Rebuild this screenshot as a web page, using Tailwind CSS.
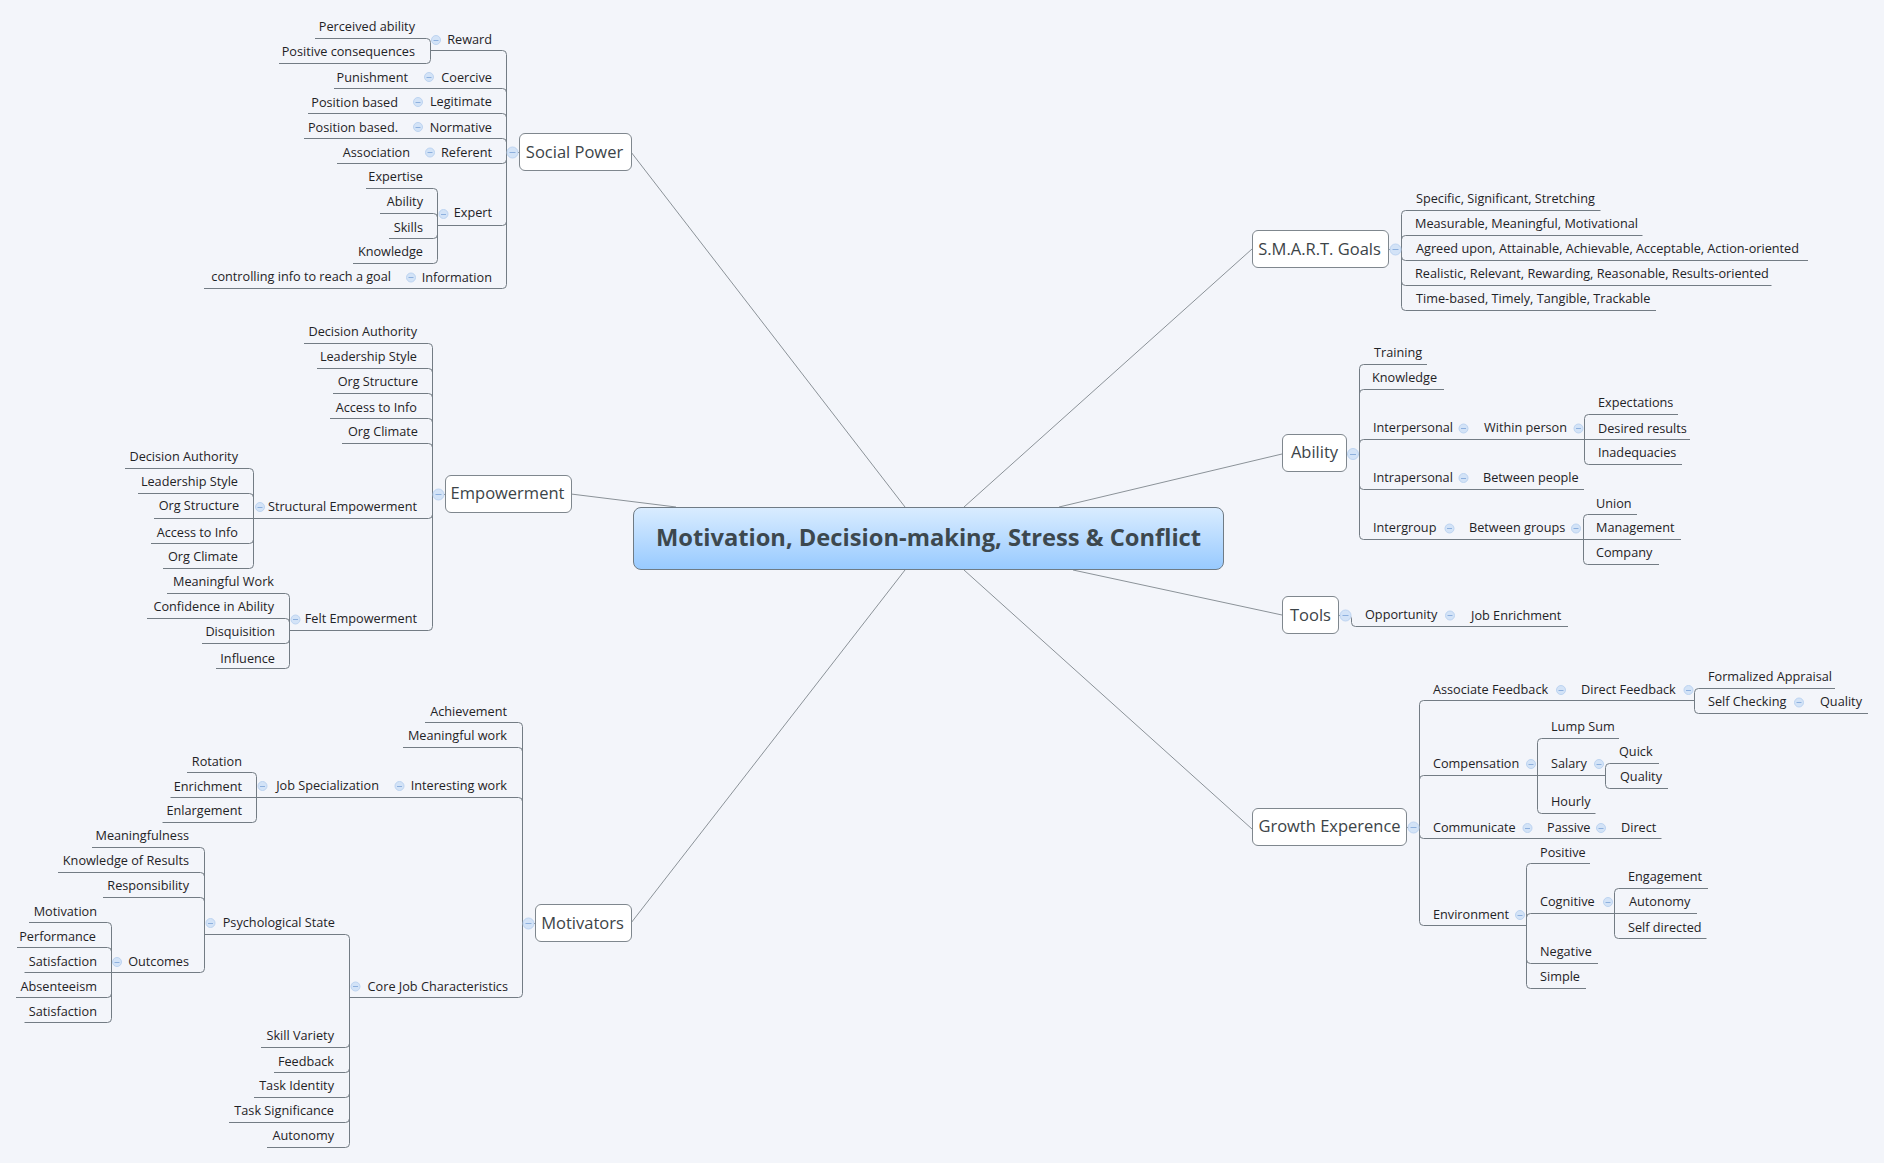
<!DOCTYPE html>
<html lang="en">
<head>
<meta charset="utf-8">
<title>Motivation, Decision-making, Stress &amp; Conflict</title>
<script src="https://cdn.jsdelivr.net/npm/@tailwindcss/browser@4"></script>
</head>
<body class="m-0 bg-[#f3f5fa]">
<div class="relative w-[1884px] h-[1163px] overflow-hidden bg-[#f3f5fa] font-['Open_Sans','Noto_Sans',sans-serif] text-[12.7px] leading-[16px] text-[#1f2326] whitespace-nowrap">

<svg class="absolute inset-0 w-[1884px] h-[1163px]" viewBox="0 0 1884 1163" fill="none">
  <!-- central connectors -->
  <g class="stroke-[#8b9298]" stroke-width="1">
    <path d="M631 152 L905 507"/>
    <path d="M571 494 L676 507"/>
    <path d="M631 923 L905 570"/>
    <path d="M1252 249 L964 507"/>
    <path d="M1282 454 L1059 507"/>
    <path d="M1282 615 L1073 570"/>
    <path d="M1252 829 L964 570"/>
  </g>
  <!-- branch lines -->
  <g class="stroke-[#737c84]" stroke-width="1">
    <!-- Social Power -->
    <path d="M506.5 152.5 H519.5"/>
    <path d="M430.5 50.5 H502.5 Q506.5 50.5 506.5 54.5 V284.5 Q506.5 288.5 502.5 288.5 H204"/>
    <path d="M334 88.5 H502.5 Q506.5 88.5 506.5 92.5"/>
    <path d="M308 113.5 H502.5 Q506.5 113.5 506.5 117.5"/>
    <path d="M304 138.5 H502.5 Q506.5 138.5 506.5 142.5"/>
    <path d="M337 163.5 H502.5 Q506.5 163.5 506.5 159.5"/>
    <path d="M437.5 225.5 H502.5 Q506.5 225.5 506.5 221.5"/>
    <path d="M315 38.5 H426.5 Q430.5 38.5 430.5 42.5 V59.5 Q430.5 63.5 426.5 63.5 H279"/>
    <path d="M366 188.5 H433.5 Q437.5 188.5 437.5 192.5 V259.5 Q437.5 263.5 433.5 263.5 H353"/>
    <path d="M380 213.5 H433.5 Q437.5 213.5 437.5 217.5"/>
    <path d="M389 238.5 H433.5 Q437.5 238.5 437.5 234.5"/>
    <!-- Empowerment -->
    <path d="M432.5 494.5 H445"/>
    <path d="M304 343.5 H428.5 Q432.5 343.5 432.5 347.5 V626.5 Q432.5 630.5 428.5 630.5 H289.5"/>
    <path d="M317 368.5 H428.5 Q432.5 368.5 432.5 372.5"/>
    <path d="M333 393.5 H428.5 Q432.5 393.5 432.5 397.5"/>
    <path d="M330 418.5 H428.5 Q432.5 418.5 432.5 422.5"/>
    <path d="M342 443.5 H428.5 Q432.5 443.5 432.5 447.5"/>
    <path d="M154 518.5 H428.5 Q432.5 518.5 432.5 514.5"/>
    <path d="M125 468.5 H249.5 Q253.5 468.5 253.5 472.5 V564.5 Q253.5 568.5 249.5 568.5 H163"/>
    <path d="M138 493.5 H249.5 Q253.5 493.5 253.5 497.5"/>
    <path d="M151 543.5 H249.5 Q253.5 543.5 253.5 539.5"/>
    <path d="M167 593.5 H285.5 Q289.5 593.5 289.5 597.5 V664.5 Q289.5 668.5 285.5 668.5 H216"/>
    <path d="M147 618.5 H285.5 Q289.5 618.5 289.5 622.5"/>
    <path d="M202 643.5 H285.5 Q289.5 643.5 289.5 639.5"/>
    <!-- Motivators -->
    <path d="M522.5 923.5 H535"/>
    <path d="M425 722.5 H518.5 Q522.5 722.5 522.5 726.5 V993.5 Q522.5 997.5 518.5 997.5 H349.5"/>
    <path d="M403 747.5 H518.5 Q522.5 747.5 522.5 751.5"/>
    <path d="M170.5 797.5 H518.5 Q522.5 797.5 522.5 801.5"/>
    <path d="M187 772.5 H252.5 Q256.5 772.5 256.5 776.5 V818.5 Q256.5 822.5 252.5 822.5 H162.5"/>
    <path d="M204.5 934.5 H345.5 Q349.5 934.5 349.5 938.5 V1143.5 Q349.5 1147.5 345.5 1147.5 H267"/>
    <path d="M261 1047.5 H345.5 Q349.5 1047.5 349.5 1043.5"/>
    <path d="M274 1072.5 H345.5 Q349.5 1072.5 349.5 1068.5"/>
    <path d="M254 1097.5 H345.5 Q349.5 1097.5 349.5 1093.5"/>
    <path d="M229 1122.5 H345.5 Q349.5 1122.5 349.5 1118.5"/>
    <path d="M92 847.5 H200.5 Q204.5 847.5 204.5 851.5 V968.5 Q204.5 972.5 200.5 972.5 H24.5"/>
    <path d="M58 872.5 H200.5 Q204.5 872.5 204.5 876.5"/>
    <path d="M103 897.5 H200.5 Q204.5 897.5 204.5 901.5"/>
    <path d="M29 922.5 H107.5 Q111.5 922.5 111.5 926.5 V1018.5 Q111.5 1022.5 107.5 1022.5 H24.5"/>
    <path d="M17 947.5 H107.5 Q111.5 947.5 111.5 951.5"/>
    <path d="M16 997.5 H107.5 Q111.5 997.5 111.5 993.5"/>
    <!-- S.M.A.R.T. Goals -->
    <path d="M1388 249.5 H1401.5"/>
    <path d="M1600.5 210.5 H1405.5 Q1401.5 210.5 1401.5 214.5 V306.5 Q1401.5 310.5 1405.5 310.5 H1656"/>
    <path d="M1642.5 235.5 H1405.5 Q1401.5 235.5 1401.5 239.5"/>
    <path d="M1808 260.5 H1405.5 Q1401.5 260.5 1401.5 256.5"/>
    <path d="M1771.5 285.5 H1405.5 Q1401.5 285.5 1401.5 281.5"/>
    <!-- Ability -->
    <path d="M1346 454.5 H1359.5"/>
    <path d="M1427 364.5 H1363.5 Q1359.5 364.5 1359.5 368.5 V535.5 Q1359.5 539.5 1363.5 539.5 H1681"/>
    <path d="M1444 389.5 H1363.5 Q1359.5 389.5 1359.5 393.5"/>
    <path d="M1690 439.5 H1363.5 Q1359.5 439.5 1359.5 443.5"/>
    <path d="M1584 489.5 H1363.5 Q1359.5 489.5 1359.5 485.5"/>
    <path d="M1678 414.5 H1588.5 Q1584.5 414.5 1584.5 418.5 V460.5 Q1584.5 464.5 1588.5 464.5 H1682"/>
    <path d="M1637 514.5 H1587.5 Q1583.5 514.5 1583.5 518.5 V560.5 Q1583.5 564.5 1587.5 564.5 H1659"/>
    <!-- Tools -->
    <path d="M1339 615.5 H1348 Q1351.5 615.5 1351.5 619 V622.5 Q1351.5 626.5 1355.5 626.5 H1568"/>
    <!-- Growth Experence -->
    <path d="M1406 827.5 H1419.5"/>
    <path d="M1694.5 700.5 H1423.5 Q1419.5 700.5 1419.5 704.5 V921.5 Q1419.5 925.5 1423.5 925.5 H1526.5"/>
    <path d="M1605.5 775.5 H1423.5 Q1419.5 775.5 1419.5 779.5"/>
    <path d="M1661.5 838.5 H1423.5 Q1419.5 838.5 1419.5 834.5"/>
    <path d="M1835 688.5 H1698.5 Q1694.5 688.5 1694.5 692.5 V709.5 Q1694.5 713.5 1698.5 713.5 H1868"/>
    <path d="M1619 738.5 H1541.5 Q1537.5 738.5 1537.5 742.5 V809.5 Q1537.5 813.5 1541.5 813.5 H1595.5"/>
    <path d="M1659 763.5 H1609.5 Q1605.5 763.5 1605.5 767.5 V784.5 Q1605.5 788.5 1609.5 788.5 H1668"/>
    <path d="M1590 863.5 H1530.5 Q1526.5 863.5 1526.5 867.5 V984.5 Q1526.5 988.5 1530.5 988.5 H1586"/>
    <path d="M1697 913.5 H1530.5 Q1526.5 913.5 1526.5 917.5"/>
    <path d="M1598 963.5 H1530.5 Q1526.5 963.5 1526.5 959.5"/>
    <path d="M1708 888.5 H1618.5 Q1614.5 888.5 1614.5 892.5 V934.5 Q1614.5 938.5 1618.5 938.5 H1706.5"/>
  </g>
  <!-- collapse buttons -->
  <g class="fill-[#d3e3f7] stroke-[#bdd4f1]" stroke-width="1">
    <circle cx="512.5" cy="152.5" r="5.5"/><circle cx="438.5" cy="494.5" r="5.5"/><circle cx="528.5" cy="923.5" r="5.5"/>
    <circle cx="1395.5" cy="249.5" r="5.5"/><circle cx="1353" cy="454" r="5.5"/><circle cx="1345.5" cy="615.5" r="5.5"/><circle cx="1413.5" cy="827.5" r="5.5"/>
    <circle cx="436" cy="40" r="4.5"/><circle cx="429" cy="77" r="4.5"/><circle cx="418" cy="102" r="4.5"/><circle cx="418" cy="127" r="4.5"/><circle cx="430" cy="152.5" r="4.5"/><circle cx="443.5" cy="214" r="4.5"/><circle cx="411" cy="277.5" r="4.5"/>
    <circle cx="260" cy="507" r="4.5"/><circle cx="295.5" cy="619.5" r="4.5"/>
    <circle cx="399.5" cy="786" r="4.5"/><circle cx="262.5" cy="786" r="4.5"/><circle cx="210.5" cy="923" r="4.5"/><circle cx="117" cy="962" r="4.5"/><circle cx="355.5" cy="986.5" r="4.5"/>
    <circle cx="1463.5" cy="428.5" r="4.5"/><circle cx="1578.5" cy="428.5" r="4.5"/><circle cx="1463.5" cy="478" r="4.5"/><circle cx="1449.5" cy="528.5" r="4.5"/><circle cx="1576" cy="528.5" r="4.5"/>
    <circle cx="1450" cy="615.5" r="4.5"/>
    <circle cx="1561" cy="690" r="4.5"/><circle cx="1688.5" cy="690" r="4.5"/><circle cx="1799" cy="702.5" r="4.5"/><circle cx="1531" cy="764" r="4.5"/><circle cx="1599" cy="764" r="4.5"/><circle cx="1527.5" cy="828" r="4.5"/><circle cx="1601" cy="828" r="4.5"/><circle cx="1520" cy="915" r="4.5"/><circle cx="1608" cy="902" r="4.5"/>
  </g>
  <path class="stroke-[#8db0de]" stroke-width="1" d="M509.5 152.5h6M435.5 494.5h6M525.5 923.5h6M1392.5 249.5h6M1350 454.5h6M1342.5 615.5h6M1410.5 827.5h6M433.5 40.5h5M426.5 77.5h5M415.5 102.5h5M415.5 127.5h5M427.5 152.5h5M441 214.5h5M408.5 277.5h5M257.5 507.5h5M293 619.5h5M397 786.5h5M260 786.5h5M208 923.5h5M114.5 962.5h5M353 986.5h5M1461 428.5h5M1576 428.5h5M1461 478.5h5M1447 528.5h5M1573.5 528.5h5M1447.5 615.5h5M1558.5 690.5h5M1686 690.5h5M1796.5 702.5h5M1528.5 764.5h5M1596.5 764.5h5M1525 828.5h5M1598.5 828.5h5M1517.5 915.5h5M1605.5 902.5h5"/>
</svg>

<!-- main topics -->
<div class="absolute left-[633px] top-[507px] w-[591px] h-[63px] rounded-lg border border-[#6f7b85] bg-gradient-to-b from-[#d9ecff] to-[#98caff] flex items-center justify-center pb-[4px] text-[23.7px] leading-[30px] font-bold text-[#3d484e]">Motivation, Decision-making, Stress &amp; Conflict</div>
<div class="absolute left-[519px] top-[133px] w-[113px] h-[38px] rounded-md border border-[#7f878e] bg-white flex items-center justify-center pr-[2px] text-[16.5px] leading-[22px] text-[#3c4448]">Social Power</div>
<div class="absolute left-[445px] top-[475px] w-[127px] h-[38px] rounded-md border border-[#7f878e] bg-white flex items-center justify-center pb-[3px] pr-[2px] text-[16.5px] leading-[22px] text-[#3c4448]">Empowerment</div>
<div class="absolute left-[535px] top-[904px] w-[97px] h-[38px] rounded-md border border-[#7f878e] bg-white flex items-center justify-center pr-[2px] text-[16.5px] leading-[22px] text-[#3c4448]">Motivators</div>
<div class="absolute left-[1252px] top-[230px] w-[137px] h-[38px] rounded-md border border-[#7f878e] bg-white flex items-center justify-center pr-[2px] text-[16.5px] leading-[22px] text-[#3c4448]">S.M.A.R.T. Goals</div>
<div class="absolute left-[1282px] top-[434px] w-[65px] h-[38px] rounded-md border border-[#7f878e] bg-white flex items-center justify-center pb-[2px] text-[16.5px] leading-[22px] text-[#3c4448]">Ability</div>
<div class="absolute left-[1282px] top-[596px] w-[57px] h-[38px] rounded-md border border-[#7f878e] bg-white flex items-center justify-center text-[16.5px] leading-[22px] text-[#3c4448]">Tools</div>
<div class="absolute left-[1252px] top-[808px] w-[155px] h-[38px] rounded-md border border-[#7f878e] bg-white flex items-center justify-center pb-[2px] text-[16.5px] leading-[22px] text-[#3c4448]">Growth Experence</div>

<!-- Social Power -->
<span class="absolute right-[1469px] top-[18px]">Perceived ability</span>
<span class="absolute right-[1469px] top-[43px]">Positive consequences</span>
<span class="absolute right-[1392px] top-[31px]">Reward</span>
<span class="absolute right-[1476px] top-[69px]">Punishment</span>
<span class="absolute right-[1392px] top-[69px]">Coercive</span>
<span class="absolute right-[1486px] top-[94px]">Position based</span>
<span class="absolute right-[1392px] top-[93px]">Legitimate</span>
<span class="absolute right-[1486px] top-[119px]">Position based.</span>
<span class="absolute right-[1392px] top-[119px]">Normative</span>
<span class="absolute right-[1474px] top-[144px]">Association</span>
<span class="absolute right-[1392px] top-[144px]">Referent</span>
<span class="absolute right-[1461px] top-[168px]">Expertise</span>
<span class="absolute right-[1461px] top-[193px]">Ability</span>
<span class="absolute right-[1461px] top-[219px]">Skills</span>
<span class="absolute right-[1461px] top-[243px]">Knowledge</span>
<span class="absolute right-[1392px] top-[204px]">Expert</span>
<span class="absolute right-[1493px] top-[268px]">controlling info to reach a goal</span>
<span class="absolute right-[1392px] top-[269px]">Information</span>

<!-- Empowerment -->
<span class="absolute right-[1467px] top-[323px]">Decision Authority</span>
<span class="absolute right-[1467px] top-[348px]">Leadership Style</span>
<span class="absolute right-[1466px] top-[373px]">Org Structure</span>
<span class="absolute right-[1467px] top-[399px]">Access to Info</span>
<span class="absolute right-[1466px] top-[423px]">Org Climate</span>
<span class="absolute right-[1467px] top-[498px]">Structural Empowerment</span>
<span class="absolute right-[1646px] top-[448px]">Decision Authority</span>
<span class="absolute right-[1646px] top-[473px]">Leadership Style</span>
<span class="absolute right-[1645px] top-[497px]">Org Structure</span>
<span class="absolute right-[1646px] top-[524px]">Access to Info</span>
<span class="absolute right-[1646px] top-[548px]">Org Climate</span>
<span class="absolute right-[1467px] top-[610px]">Felt Empowerment</span>
<span class="absolute right-[1610px] top-[573px]">Meaningful Work</span>
<span class="absolute right-[1610px] top-[598px]">Confidence in Ability</span>
<span class="absolute right-[1609px] top-[623px]">Disquisition</span>
<span class="absolute right-[1609px] top-[650px]">Influence</span>

<!-- Motivators -->
<span class="absolute right-[1377px] top-[703px]">Achievement</span>
<span class="absolute right-[1377px] top-[727px]">Meaningful work</span>
<span class="absolute right-[1377px] top-[777px]">Interesting work</span>
<span class="absolute right-[1505px] top-[777px]">Job Specialization</span>
<span class="absolute right-[1642px] top-[753px]">Rotation</span>
<span class="absolute right-[1642px] top-[778px]">Enrichment</span>
<span class="absolute right-[1642px] top-[802px]">Enlargement</span>
<span class="absolute right-[1549px] top-[914px]">Psychological State</span>
<span class="absolute right-[1695px] top-[827px]">Meaningfulness</span>
<span class="absolute right-[1695px] top-[852px]">Knowledge of Results</span>
<span class="absolute right-[1695px] top-[877px]">Responsibility</span>
<span class="absolute right-[1695px] top-[953px]">Outcomes</span>
<span class="absolute right-[1787px] top-[903px]">Motivation</span>
<span class="absolute right-[1788px] top-[928px]">Performance</span>
<span class="absolute right-[1787px] top-[953px]">Satisfaction</span>
<span class="absolute right-[1787px] top-[978px]">Absenteeism</span>
<span class="absolute right-[1787px] top-[1003px]">Satisfaction</span>
<span class="absolute right-[1376px] top-[978px]">Core Job Characteristics</span>
<span class="absolute right-[1550px] top-[1027px]">Skill Variety</span>
<span class="absolute right-[1550px] top-[1053px]">Feedback</span>
<span class="absolute right-[1550px] top-[1077px]">Task Identity</span>
<span class="absolute right-[1550px] top-[1102px]">Task Significance</span>
<span class="absolute right-[1550px] top-[1127px]">Autonomy</span>

<!-- S.M.A.R.T. Goals -->
<span class="absolute left-[1416px] top-[190px]">Specific, Significant, Stretching</span>
<span class="absolute left-[1415px] top-[215px]">Measurable, Meaningful, Motivational</span>
<span class="absolute left-[1416px] top-[240px]">Agreed upon, Attainable, Achievable, Acceptable, Action-oriented</span>
<span class="absolute left-[1415px] top-[265px]">Realistic, Relevant, Rewarding, Reasonable, Results-oriented</span>
<span class="absolute left-[1416px] top-[290px]">Time-based, Timely, Tangible, Trackable</span>

<!-- Ability -->
<span class="absolute left-[1374px] top-[344px]">Training</span>
<span class="absolute left-[1372px] top-[369px]">Knowledge</span>
<span class="absolute left-[1373px] top-[419px]">Interpersonal</span>
<span class="absolute left-[1484px] top-[419px]">Within person</span>
<span class="absolute left-[1598px] top-[394px]">Expectations</span>
<span class="absolute left-[1598px] top-[420px]">Desired results</span>
<span class="absolute left-[1598px] top-[444px]">Inadequacies</span>
<span class="absolute left-[1373px] top-[469px]">Intrapersonal</span>
<span class="absolute left-[1483px] top-[469px]">Between people</span>
<span class="absolute left-[1373px] top-[519px]">Intergroup</span>
<span class="absolute left-[1469px] top-[519px]">Between groups</span>
<span class="absolute left-[1596px] top-[495px]">Union</span>
<span class="absolute left-[1596px] top-[519px]">Management</span>
<span class="absolute left-[1596px] top-[544px]">Company</span>

<!-- Tools -->
<span class="absolute left-[1365px] top-[606px]">Opportunity</span>
<span class="absolute left-[1471px] top-[607px]">Job Enrichment</span>

<!-- Growth Experence -->
<span class="absolute left-[1433px] top-[681px]">Associate Feedback</span>
<span class="absolute left-[1581px] top-[681px]">Direct Feedback</span>
<span class="absolute left-[1708px] top-[668px]">Formalized Appraisal</span>
<span class="absolute left-[1708px] top-[693px]">Self Checking</span>
<span class="absolute left-[1820px] top-[693px]">Quality</span>
<span class="absolute left-[1433px] top-[755px]">Compensation</span>
<span class="absolute left-[1551px] top-[718px]">Lump Sum</span>
<span class="absolute left-[1551px] top-[755px]">Salary</span>
<span class="absolute left-[1619px] top-[743px]">Quick</span>
<span class="absolute left-[1620px] top-[768px]">Quality</span>
<span class="absolute left-[1551px] top-[793px]">Hourly</span>
<span class="absolute left-[1433px] top-[819px]">Communicate</span>
<span class="absolute left-[1547px] top-[819px]">Passive</span>
<span class="absolute left-[1621px] top-[819px]">Direct</span>
<span class="absolute left-[1433px] top-[906px]">Environment</span>
<span class="absolute left-[1540px] top-[844px]">Positive</span>
<span class="absolute left-[1540px] top-[893px]">Cognitive</span>
<span class="absolute left-[1628px] top-[868px]">Engagement</span>
<span class="absolute left-[1629px] top-[893px]">Autonomy</span>
<span class="absolute left-[1628px] top-[919px]">Self directed</span>
<span class="absolute left-[1540px] top-[943px]">Negative</span>
<span class="absolute left-[1540px] top-[968px]">Simple</span>

</div>
</body>
</html>
